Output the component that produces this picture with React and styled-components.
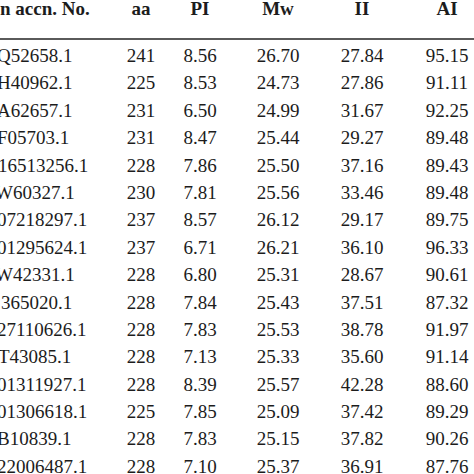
import React from 'react';
import styled, { createGlobalStyle } from 'styled-components';

const GlobalStyle = createGlobalStyle`
  html, body {
    margin: 0;
    padding: 0;
    background: #fff;
    overflow: hidden;
  }
`;

const Page = styled.div`
  width: 474px;
  height: 474px;
  overflow: hidden;
  font-family: "Liberation Serif", "Times New Roman", serif;
  font-size: 19px;
  color: #1c1c1c;
`;

const COLS = '112px 58px 60px 96px 72px 98px';

const HeadRow = styled.div`
  display: grid;
  grid-template-columns: ${COLS};
  height: 40px;
  line-height: 18px;
  font-weight: bold;
  border-bottom: 2px solid #5a5a5a;
  box-sizing: border-box;
  width: 496px;
`;

const Body = styled.div`
  padding-top: 2px;
`;

const Row = styled.div`
  display: grid;
  grid-template-columns: ${COLS};
  height: 27.4px;
  line-height: 27.4px;
  align-items: center;
  width: 496px;
  white-space: nowrap;
`;

const Cell = styled.div`
  text-align: ${(p) => (p.$left ? 'left' : 'center')};
  margin-left: ${(p) => (p.$shift ? `${p.$shift}px` : '0')};
`;

const rows = [
  ['Q52658.1', -3, '241', '8.56', '26.70', '27.84', '95.15'],
  ['H40962.1', -3, '225', '8.53', '24.73', '27.86', '91.11'],
  ['A62657.1', -3, '231', '6.50', '24.99', '31.67', '92.25'],
  ['F05703.1', -3, '231', '8.47', '25.44', '29.27', '89.48'],
  ['16513256.1', -2, '228', '7.86', '25.50', '37.16', '89.43'],
  ['W60327.1', -5, '230', '7.81', '25.56', '33.46', '89.48'],
  ['07218297.1', -3, '237', '8.57', '26.12', '29.17', '89.75'],
  ['01295624.1', -3, '237', '6.71', '26.21', '36.10', '96.33'],
  ['W42331.1', -5, '228', '6.80', '25.31', '28.67', '90.61'],
  ['365020.1', 1, '228', '7.84', '25.43', '37.51', '87.32'],
  ['27110626.1', -3, '228', '7.83', '25.53', '38.78', '91.97'],
  ['T43085.1', -2, '228', '7.13', '25.33', '35.60', '91.14'],
  ['01311927.1', -3, '228', '8.39', '25.57', '42.28', '88.60'],
  ['01306618.1', -3, '225', '7.85', '25.09', '37.42', '89.29'],
  ['B10839.1', -3, '228', '7.83', '25.15', '37.82', '90.26'],
  ['22006487.1', -3, '228', '7.10', '25.37', '36.91', '87.76'],
];

const App = () => (
  <Page>
    <GlobalStyle />
    <HeadRow>
      <Cell $left>n accn. No.</Cell>
      <Cell>aa</Cell>
      <Cell>PI</Cell>
      <Cell>Mw</Cell>
      <Cell>II</Cell>
      <Cell>AI</Cell>
    </HeadRow>
    <Body>
      {rows.map(([acc, shift, ...vals]) => (
        <Row key={acc}>
          <Cell $left $shift={shift}>{acc}</Cell>
          {vals.map((v, i) => (
            <Cell key={i}>{v}</Cell>
          ))}
        </Row>
      ))}
    </Body>
  </Page>
);

export default App;
